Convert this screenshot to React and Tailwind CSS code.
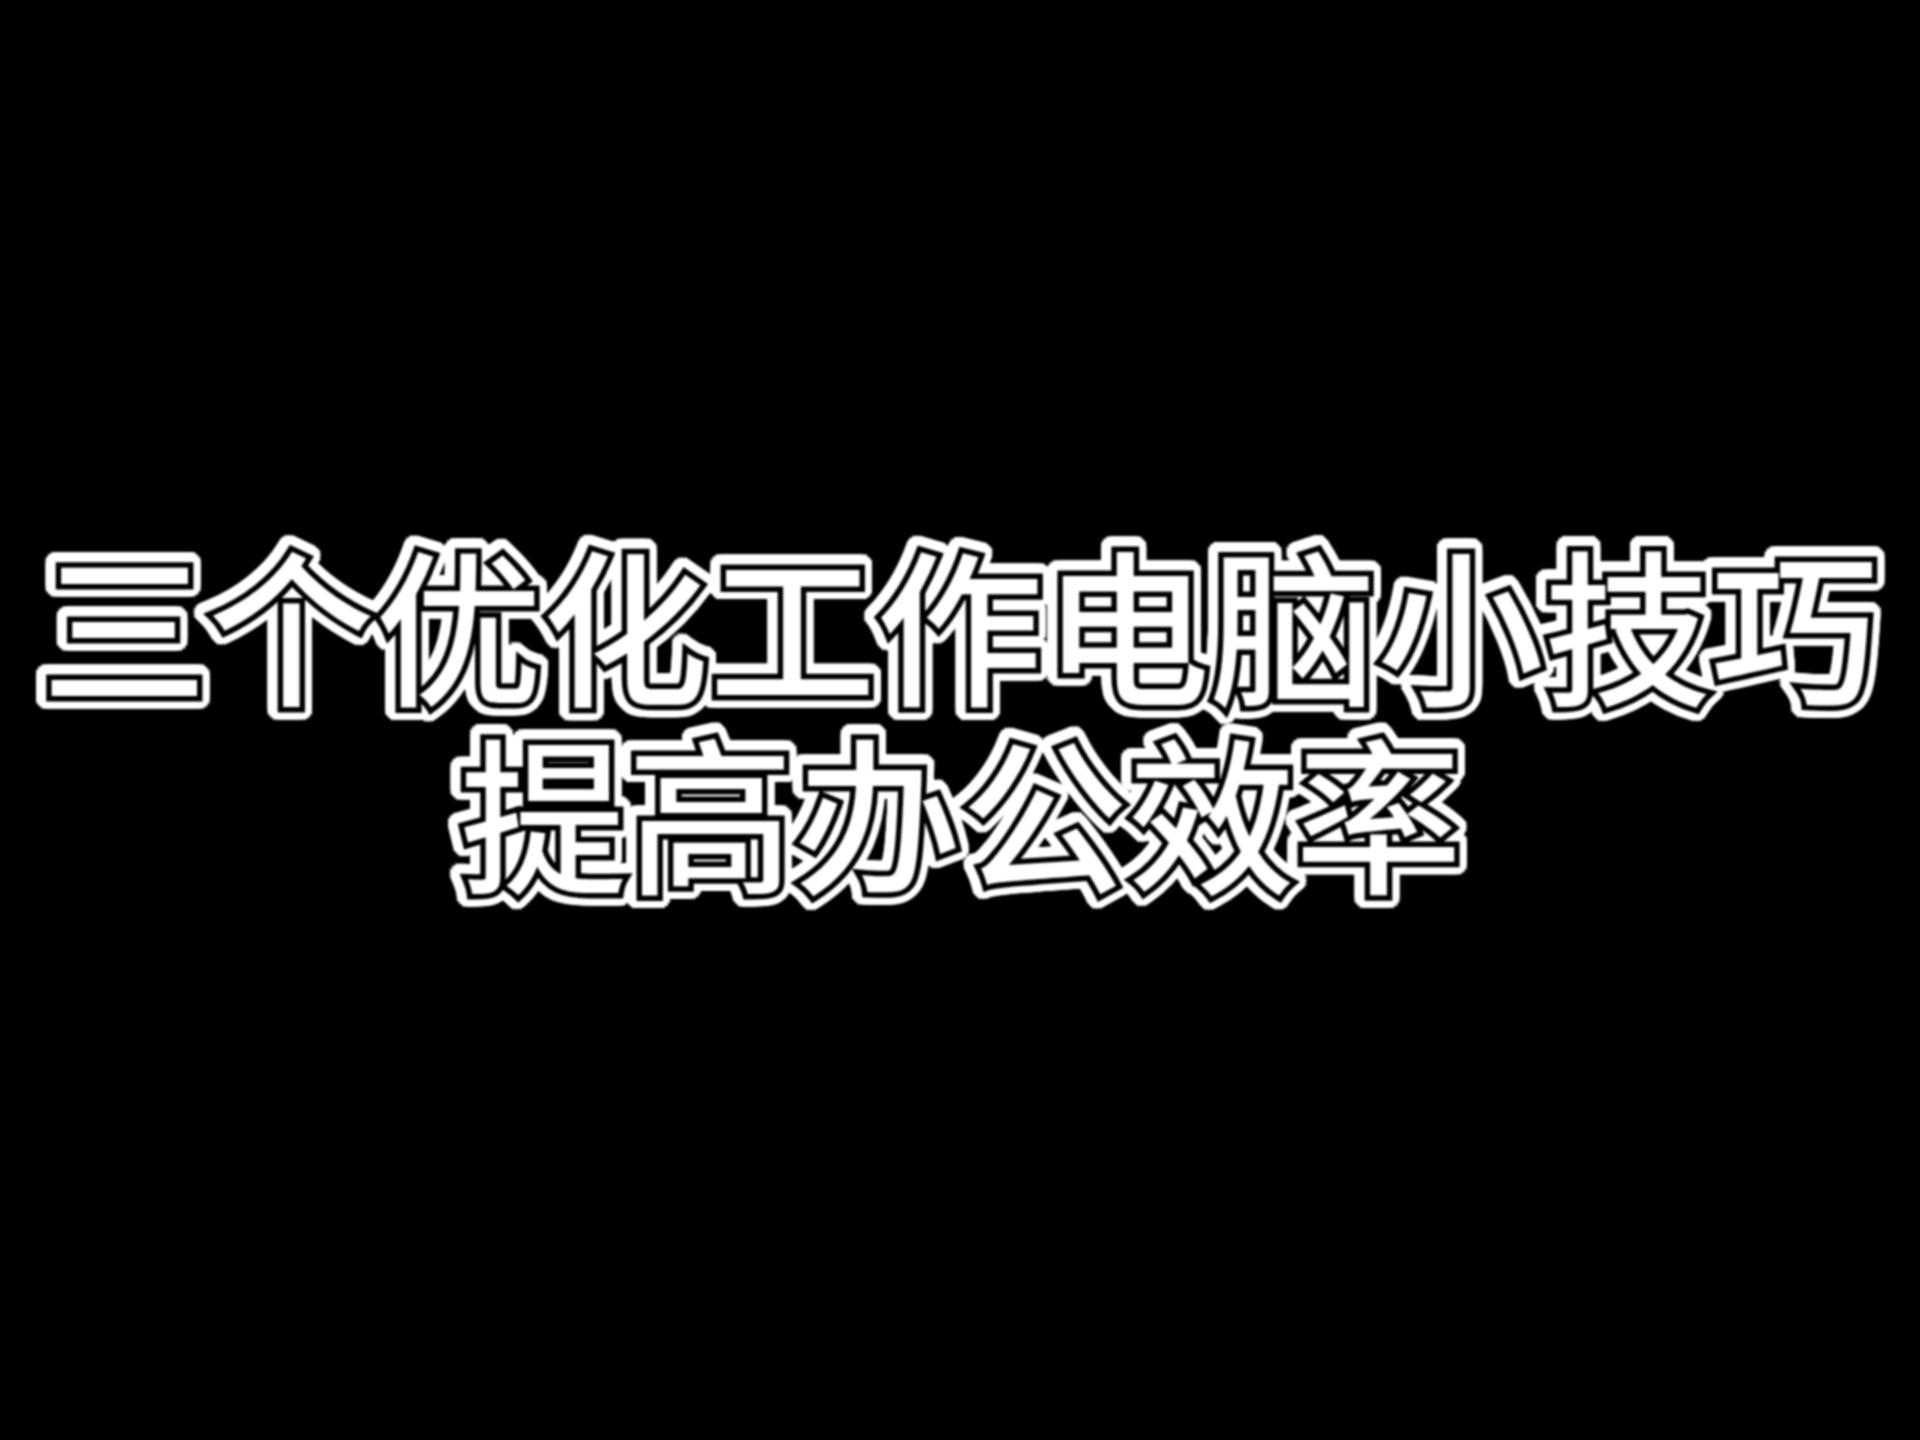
import React from "react";

// white fill + black outline, the filter chain grows the outer white ring
const titleStyle =
  "whitespace-nowrap text-white [-webkit-text-stroke:11px_#000] [paint-order:stroke_fill] [filter:drop-shadow(3.6px_0_0_#fff)_drop-shadow(-3.6px_0_0_#fff)_drop-shadow(0_3.6px_0_#fff)_drop-shadow(0_-3.6px_0_#fff)_drop-shadow(2.6px_2.6px_0_#fff)_drop-shadow(-2.6px_-2.6px_0_#fff)_drop-shadow(2.6px_-2.6px_0_#fff)_drop-shadow(-2.6px_2.6px_0_#fff)_blur(1.2px)]";

export default function App() {
  return (
    <div className="w-[1920px] h-[1440px] bg-black flex flex-col pt-[526px] font-['Noto_Sans_CJK_SC',sans-serif] text-[167px] leading-[188px] font-medium">
      <div className={`pl-[41px] ${titleStyle}`}>三个优化工作电脑小技巧</div>
      <div className={`pl-[460px] ${titleStyle}`}>提高办公效率</div>
    </div>
  );
}
